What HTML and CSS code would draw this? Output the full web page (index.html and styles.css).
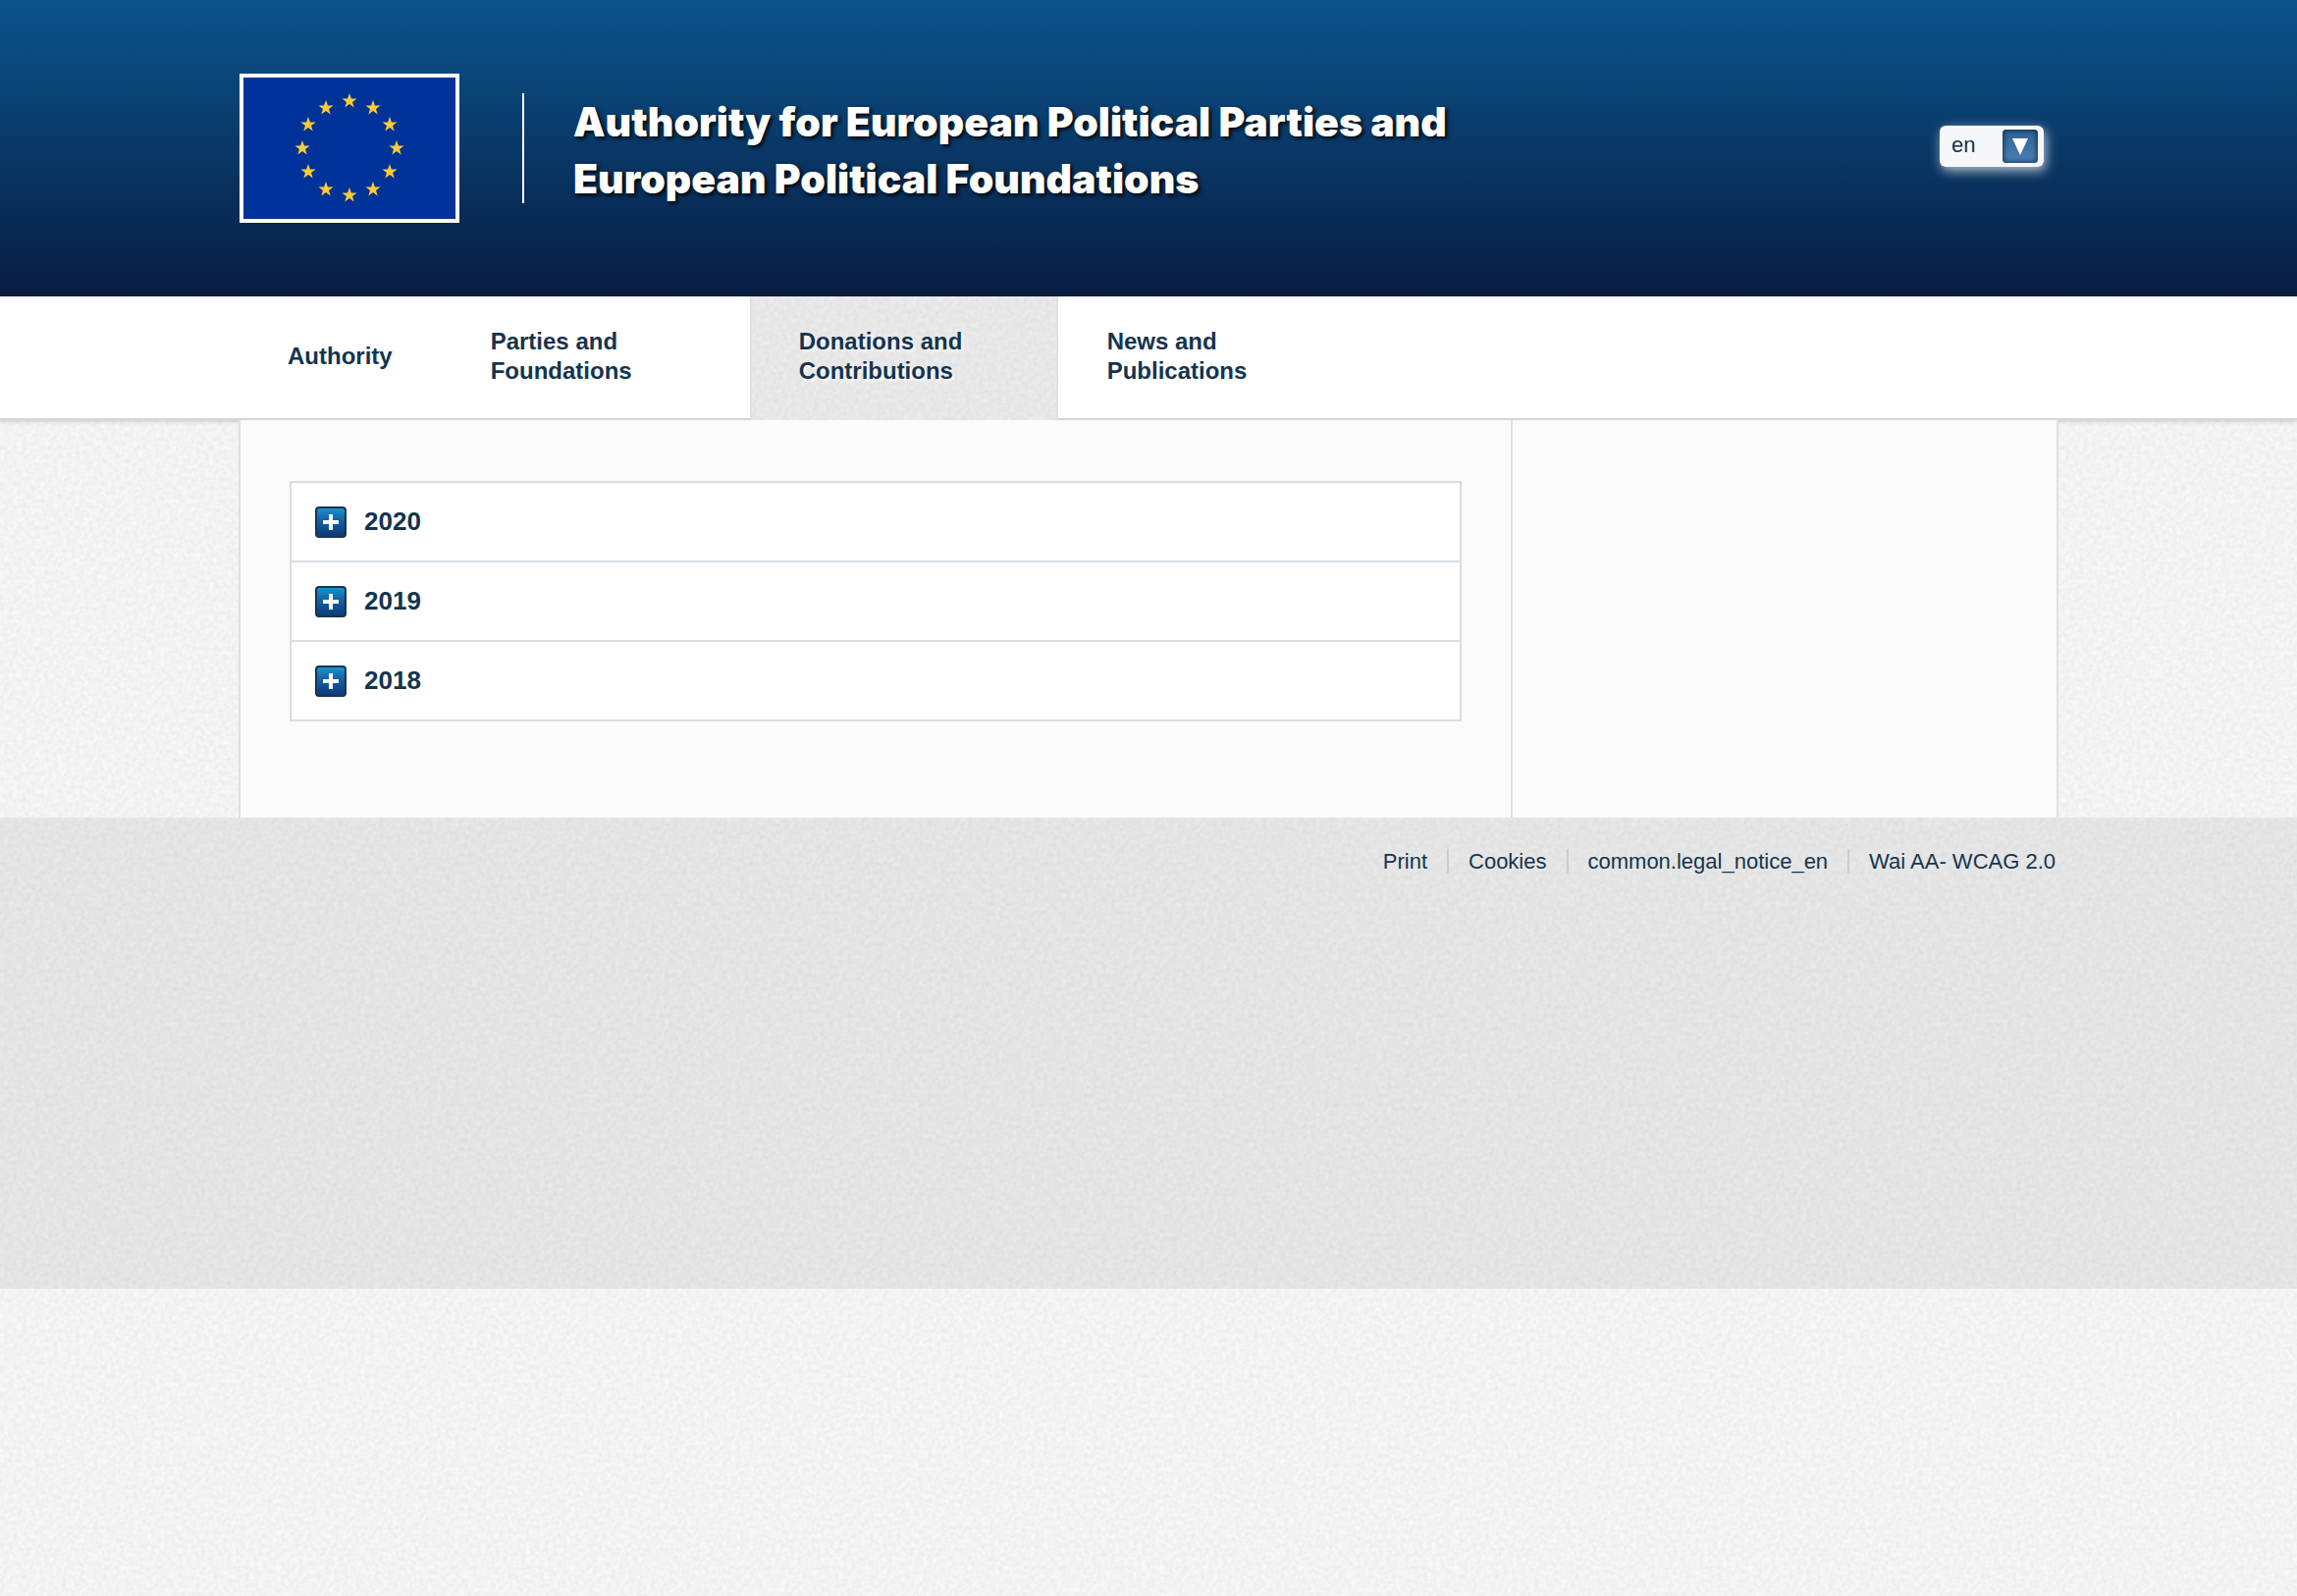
FILE: index.html
```html
<!DOCTYPE html>
<html lang="en">
<head>
<meta charset="utf-8">
<title>Donations and Contributions</title>
<meta name="viewport" content="width=device-width, initial-scale=1">
<link rel="stylesheet" href="styles.css">
</head>
<body>
<header class="site-header">
  <div class="container header-row">
    <a class="flag" href="#" aria-label="European Union">
      <svg viewBox="0 0 216 144" width="216" height="144" fill="#ffcc33" aria-hidden="true">
        <defs><path id="star" d="M0-8 1.9-2.5H7.6L3 .9 4.7 6.5 0 3.1-4.7 6.5-3 .9-7.6-2.5H-1.9Z"/></defs>
        <use href="#star" x="108" y="24"/>
        <use href="#star" x="132" y="31"/>
        <use href="#star" x="149" y="48"/>
        <use href="#star" x="156" y="72"/>
        <use href="#star" x="149" y="96"/>
        <use href="#star" x="132" y="114"/>
        <use href="#star" x="108" y="120"/>
        <use href="#star" x="84" y="114"/>
        <use href="#star" x="66" y="96"/>
        <use href="#star" x="60" y="72"/>
        <use href="#star" x="66" y="48"/>
        <use href="#star" x="84" y="31"/>
      </svg>
    </a>
    <h1 class="site-title">Authority for European Political Parties and<br>European Political Foundations</h1>
    <div class="language">
      <select class="language-select" aria-label="Language">
        <option>en</option>
      </select>
      <span class="language-arrow" aria-hidden="true"><svg viewBox="0 0 16 17" width="16" height="17"><path d="M0 0H16L8 17Z" fill="#fff"/></svg></span>
    </div>
  </div>
</header>
<nav class="site-nav" aria-label="Main">
  <ul class="nav-list">
    <li class="nav-item"><a href="#">Authority</a></li>
    <li class="nav-item"><a href="#">Parties and Foundations</a></li>
    <li class="nav-item active"><a href="#" aria-current="page">Donations and Contributions</a></li>
    <li class="nav-item"><a href="#">News and Publications</a></li>
  </ul>
</nav>
<div class="page-box">
  <main class="content">
    <ul class="accordion">
      <li><button class="year" type="button" aria-expanded="false"><span class="plus" aria-hidden="true"></span><span class="year-label">2020</span></button></li>
      <li><button class="year" type="button" aria-expanded="false"><span class="plus" aria-hidden="true"></span><span class="year-label">2019</span></button></li>
      <li><button class="year" type="button" aria-expanded="false"><span class="plus" aria-hidden="true"></span><span class="year-label">2018</span></button></li>
    </ul>
  </main>
  <aside class="sidebar"></aside>
</div>
<footer class="site-footer">
  <ul class="container footer-links">
    <li><a href="#">Print</a></li>
    <li><a href="#">Cookies</a></li>
    <li><a href="#">common.legal_notice_en</a></li>
    <li><a href="#">Wai AA- WCAG 2.0</a></li>
  </ul>
</footer>
</body>
</html>
```
FILE: styles.css
```css
:root {
  --ink: #14344f;
  --line: #dce1e5;
  --grain: url("data:image/svg+xml,%3Csvg xmlns='http://www.w3.org/2000/svg' width='300' height='300'%3E%3Cfilter id='n' x='0' y='0' width='100%25' height='100%25'%3E%3CfeTurbulence type='fractalNoise' baseFrequency='.22' numOctaves='2' stitchTiles='stitch'/%3E%3CfeColorMatrix values='0 0 0 0 0 0 0 0 0 0 0 0 0 0 0 .08 0 0 0 -.02'/%3E%3C/filter%3E%3Crect width='300' height='300' filter='url(%23n)'/%3E%3C/svg%3E");
}

* {
  box-sizing: border-box;
}

body {
  margin: 0;
  background: #f8f8f8 var(--grain);
  color: var(--ink);
  font-family: "Liberation Sans", Arial, sans-serif;
  font-size: 22px;
}

ul {
  margin: 0;
  padding: 0;
  list-style: none;
}

a {
  color: inherit;
  text-decoration: none;
}

.container {
  max-width: 1852px;
  margin: 0 auto;
}

.site-header {
  padding: 75px 0;
  background: linear-gradient(#0b548c, #081c42);
}

.header-row {
  display: flex;
  align-items: center;
}

.flag {
  flex: none;
  border: 4px solid #fff;
  background: #003399;
}

.flag svg {
  display: block;
}

.site-title {
  margin: 0 0 0 64px;
  padding: 4px 0 0 52px;
  color: #fff;
  font: 900 41px/58px Inter, "Arial Black", sans-serif;
  text-shadow: 2px 2px 4px #000;
  background: linear-gradient(#fff, #fff) left / 2px 112px no-repeat;
}

.language {
  display: flex;
  position: relative;
  margin: 0 14px 4px auto;
  border-radius: 6px;
  box-shadow: 2px 4px 12px rgba(255, 255, 255, .7);
}

.language-select {
  width: 106px;
  height: 42px;
  padding: 0 12px 4px;
  border: 0;
  border-radius: 6px;
  appearance: none;
  background: #f6f7f9;
  color: var(--ink);
  font: inherit;
}

.language-arrow {
  position: absolute;
  top: 4px;
  right: 6px;
  display: grid;
  place-items: center;
  width: 36px;
  height: 34px;
  border-radius: 4px;
  background: linear-gradient(#2a6093, #4c82b4);
  box-shadow: inset 0 0 5px 1px #12304f;
  pointer-events: none;
}

.site-nav {
  position: relative;
  background: #fff;
  border-bottom: 2px solid #d6d6d6;
  box-shadow: 0 1px 5px rgba(0, 0, 0, .2);
}

.nav-list {
  display: flex;
  position: relative;
  max-width: 1854px;
  margin: 0 auto -2px;
}

.nav-item {
  display: flex;
  align-items: center;
  max-width: 314px;
  min-height: 126px;
  padding: 0 48px;
  border: solid transparent;
  border-width: 0 2px;
  font-size: 24px;
  font-weight: bold;
  line-height: 30px;
}

.nav-item a {
  padding-bottom: 4px;
}

.nav-item.active {
  background: #ececec var(--grain);
  border-color: var(--line);
  text-shadow: 2px 2px 3px #fff;
}

.page-box {
  position: relative;
  display: grid;
  grid-template-columns: 1294fr 556fr;
  max-width: 1854px;
  margin: 0 auto;
  border: solid var(--line);
  border-width: 0 2px;
  background: #fbfbfb;
}

.content {
  padding: 62px 50px 98px;
}

.sidebar {
  border-left: 2px solid var(--line);
}

.accordion {
  border: 2px solid #d8dde2;
  background: #fff;
}

.accordion li + li {
  border-top: 2px solid #d8dde2;
}

.year {
  display: flex;
  align-items: center;
  gap: 18px;
  width: 100%;
  height: 79px;
  padding: 0 24px;
  border: 0;
  background: none;
  color: var(--ink);
  font: bold 26px/30px "Liberation Sans", Arial, sans-serif;
  text-align: left;
}

.year-label {
  padding-bottom: 2px;
}

.plus {
  width: 32px;
  height: 32px;
  border: 2px solid #173452;
  border-radius: 4px;
  background:
    linear-gradient(#fff, #fff) center / 16px 4px no-repeat,
    linear-gradient(#fff, #fff) center / 4px 16px no-repeat,
    linear-gradient(#1a93cb, #1464a8 40%, #0a3a7a);
}

.site-footer {
  min-height: 480px;
  padding-top: 32px;
  background: #e9e9e9 var(--grain);
}

.footer-links {
  display: flex;
  justify-content: flex-end;
  padding-right: 2px;
  line-height: 25px;
}

.footer-links li + li {
  margin-left: 20px;
  padding-left: 20px;
  border-left: 2px solid #cccccc;
}
```
